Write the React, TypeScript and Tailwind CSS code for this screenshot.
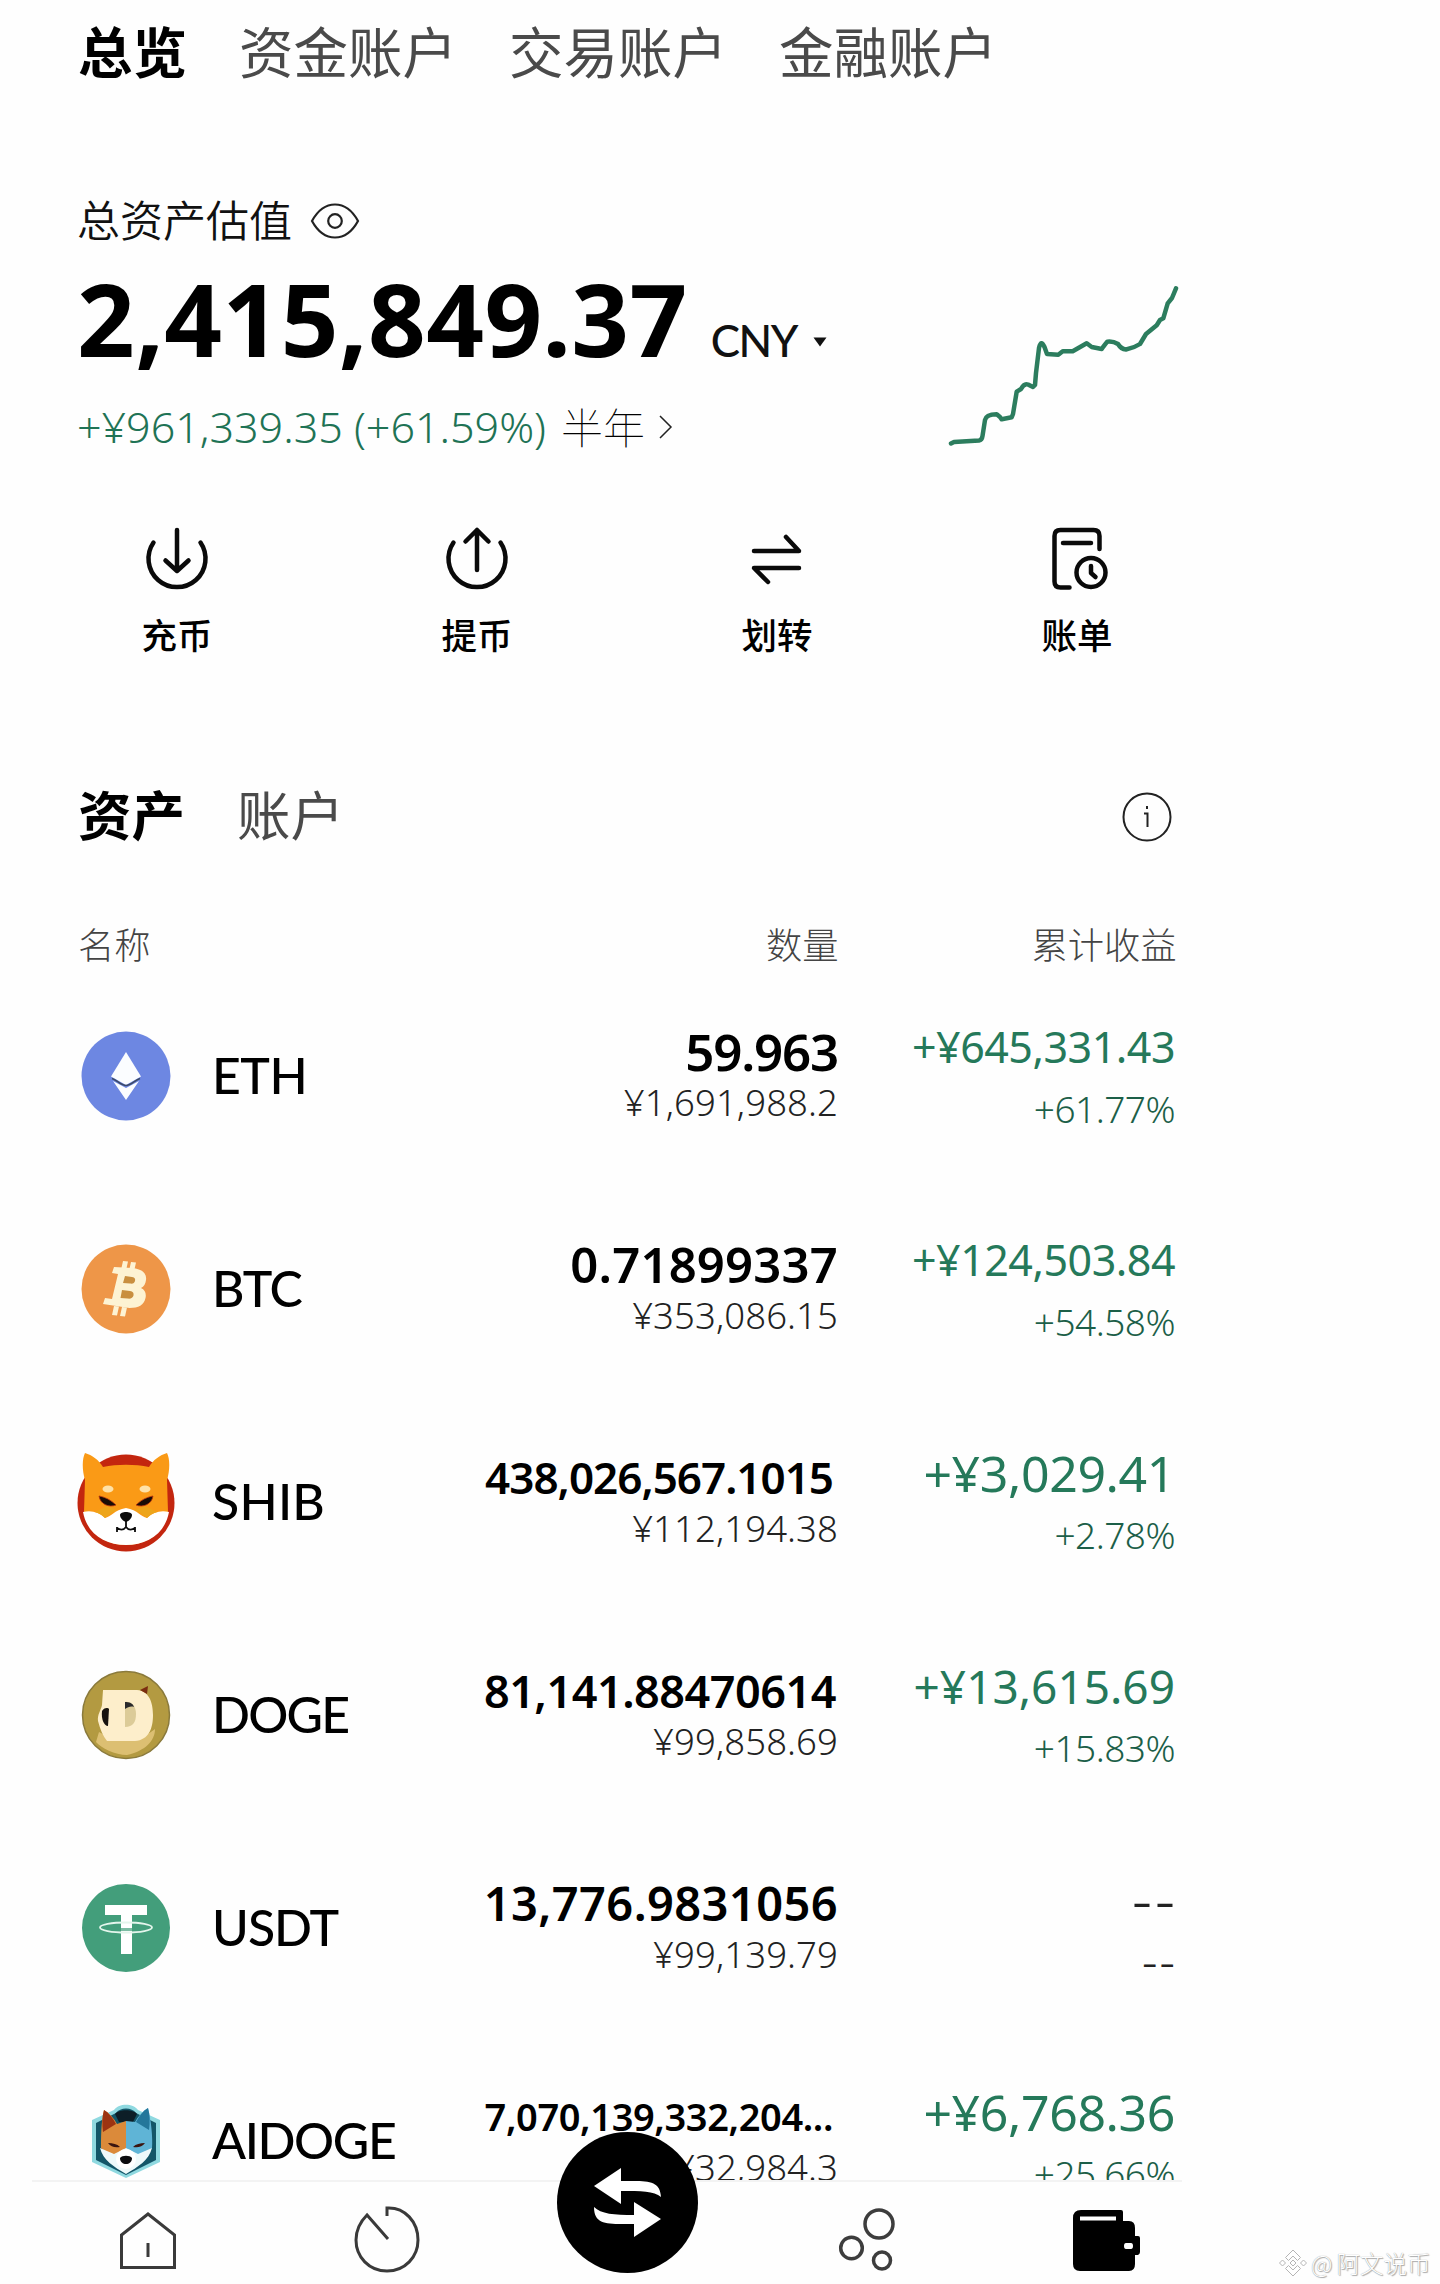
import React from 'react';

const sans = "font-['Noto_Sans','Noto_Sans_CJK_SC',sans-serif]";
const cjk = "font-['Noto_Sans_CJK_SC','Noto_Sans',sans-serif]";
const lato = "font-['Lato','Noto_Sans',sans-serif]";

type Asset = {
  name: string;
  icon: React.ReactNode;
  nameCls: string;
  amount: string;
  amountCls: string;
  value: string;
  gain: string;
  gainCls: string;
  pct: string;
  pctCls: string;
};

function EthIcon() {
  return (
    <svg viewBox="0 0 90 90" className="size-[90px]">
      <circle cx="45" cy="45" r="44.5" fill="#6d87e2" />
      <path d="M45 21 60 45.5 45 54 30 45.5Z" fill="#fbfdff" />
      <path d="M32 50 45 57 58 50 45 69Z" fill="#fbfdff" />
      <path d="M31 47.5c5 1.500 9 7 14 7s9-5.500 14-7" fill="none" stroke="#3c4a66" strokeWidth="1.500" />
    </svg>
  );
}

function BtcIcon() {
  return (
    <svg viewBox="0 0 90 90" className="size-[90px]">
      <circle cx="45" cy="45" r="44.5" fill="#ee9648" />
      <g fill="#fdf3d3">
        <path d="m33 23 18 1c10 1 15 5 14 12-.5 4-2 6.500-5 8 4 2 5.500 5.500 4.500 10-1.500 7-7 10-16 10L22 60l2-6 7 1 6-25-6-1z" />
        <path d="m42 17 5 .5-2 9-5-.5zM50 18l5 .5-2 9-5-.5zM33 62l5 .5-2 9-5-.5zM41 63l5 .5-2 9-5-.5z" />
      </g>
      <path d="m44 32 7 1c3 .5 3.500 2 3 4s-2 3-5 2.500l-7-.5zM41 46l8 1c3 .5 4 2 3.500 4.500s-3 3.500-6 3l-7-.5z" fill="#c98f3f" />
    </svg>
  );
}

function ShibIcon() {
  return (
    <svg viewBox="0 0 98 100" className="h-[100px] w-[98px]">
      <circle cx="49" cy="51" r="48.500" fill="#c3260f" />
      <path d="M8 1C5 7 5 18 8 28L7 60c4 22 22 33 42 33s38-11 42-33l-1-32c3-10 3-21 0-27-7 2-14 7-18 14-14-3-32-3-46 0C22 8 15 3 8 1Z" fill="#fa9a16" />
      <path d="M28 13C40 8 58 8 70 13c-6 -6 -14 -9.500 -21 -9.500S34 7 28 13Z" fill="#c3260f" />
      <path d="M6 60c8-2 16 0 22 6 6-1 9-8 21-10 12 2 15 9 21 10 6-6 14-8 22-6-4 22-22 33-43 33S10 82 6 60Z" fill="#fff" />
      <path d="M28 66c3-3 8-6 12-8l-10-4-12 6c4 1 7 3 10 6ZM70 66c-3-3-8-6-12-8l10-4 12 6c-4 1-7 3-10 6Z" fill="#eda51b" />
      <ellipse cx="31" cy="37" rx="5.500" ry="3.500" fill="#ffe2a8" />
      <ellipse cx="68" cy="37" rx="5.500" ry="3.500" fill="#ffe2a8" />
      <path d="M22 44c6 1 12 4 17 9-7 3-16-1-17-9ZM76 44c-6 1-12 4-17 9 7 3 16-1 17-9Z" fill="#180c06" stroke="#b8330e" strokeWidth=".8" />
      <path d="M43 63c0-4 12-4 12 0 0 3-3 6-6 7-3-1-6-4-6-7Z" fill="#0b0b0b" />
      <path d="M49 69v6m0 0c-3 4-6 3-9 1m9-1c3 4 6 3 9 1M40 75v5M58 75v5" fill="none" stroke="#0b0b0b" strokeWidth="1.800" />
    </svg>
  );
}

function DogeIcon() {
  return (
    <svg viewBox="0 0 90 90" className="size-[90px]">
      <circle cx="45" cy="45" r="43.500" fill="#b39a41" stroke="#8a7a3c" strokeWidth="1.500" />
      <path d="M18 62c10 6 20 4 32 6 10 0 18-4 24-9 0 12-10 22-28 26C34 85 20 78 15 72Z" fill="#dcbf72" />
      <path d="M22 20h34c12 1 16 12 16 25S68 70 54 71H26c-4-5-7-12-9-20-1-6 3-11 4-16Z" fill="#fdeecb" />
      <path d="M44 32c6-1 11 4 11 12s-3 13-11 13Z" fill="#dccb98" />
      <path d="M44 32c4 0 8 1 9 5-3-1-6 0-9 2Z" fill="#2a2a2c" />
      <path d="M21 41c3-4 6-3 7-2l-1 17c-4 0-7-7-6-15Z" fill="#17120e" />
      <path d="m59 20 8-4-1 8z" fill="#7a2c10" />
    </svg>
  );
}

function UsdtIcon() {
  return (
    <svg viewBox="0 0 90 90" className="size-[90px]">
      <circle cx="45" cy="45" r="44" fill="#439e7b" />
      <path d="M24 22h42v10H51v39H40V32H24Z" fill="#fff" />
      <ellipse cx="45" cy="44.500" rx="26" ry="5" fill="none" stroke="#e4f5ec" strokeWidth="1.800" />
      <path d="M40 45h11v3H40z" fill="#439e7b" opacity=".7" />
    </svg>
  );
}

function AidogeIcon() {
  return (
    <svg viewBox="0 0 76 78" className="h-[78px] w-[76px]">
      <path d="M4 18 26 8c5-7 19-7 24 0l22 10v42L38 76 4 60Z" fill="#8fd9e0" />
      <path d="M8 21 28 11c4-6 16-6 20 0l20 10v37L38 73 8 58Z" fill="#135668" />
      <path d="M27 12c4-5 18-5 22 0l-4 8H31Z" fill="#0d1e27" />
      <path d="M16 8c5 3 10 8 13 14l9-3v49L24 58 13 46c0-8 0-27 3-38Z" fill="#db8a3a" />
      <path d="M16 8c5 3 9 8 12 14l-13 8c-1-8-1-15 1-22Z" fill="#9c3311" />
      <path d="M60 6c-5 3-10 8-13 14l-9-1v49l14-10 12-12c1-9-1-29-4-40Z" fill="#5fb4d6" />
      <path d="M60 6c-5 3-9 8-12 14l13 8c1-8 1-15-1-22Z" fill="#24779b" />
      <path d="m12 46 14 6 12-6 12 6 14-6c-3 12-14 19-26 26C26 65 15 58 12 46Z" fill="#eef9fa" />
      <path d="M20 41c5 0 9 1 12 4-5 1-9 0-12-4ZM57 41c-5 0-9 1-12 4 5 1 9 0 12-4Z" fill="#3b1510" />
      <circle cx="38" cy="57" r="10" fill="#fff" />
      <path d="M32 56c2-3 10-3 12 0 0 4-3 6-6 6s-6-2-6-6Z" fill="#0c0c0f" />
    </svg>
  );
}

const green = 'text-[#25795a]';
const pctBase = 'text-[37px] tracking-[-0.5px] text-[#1c5f48]';

const assets: Asset[] = [
  { name: 'ETH', icon: <EthIcon />, nameCls: 'tracking-[-0.5px]', amount: '59.963', amountCls: 'text-[51px] tracking-[-1.2px]', value: '¥1,691,988.2', gain: '+¥645,331.43', gainCls: `text-[43px] tracking-[-0.5px] ${green}`, pct: '+61.77%', pctCls: pctBase },
  { name: 'BTC', icon: <BtcIcon />, nameCls: 'tracking-[-1.2px]', amount: '0.71899337', amountCls: 'text-[49px] tracking-[0.2px]', value: '¥353,086.15', gain: '+¥124,503.84', gainCls: `text-[43px] tracking-[-0.5px] ${green}`, pct: '+54.58%', pctCls: pctBase },
  { name: 'SHIB', icon: <ShibIcon />, nameCls: 'tracking-[0.2px]', amount: '438,026,567.1015', amountCls: 'text-[44px] tracking-[-1px] pr-[5px]', value: '¥112,194.38', gain: '+¥3,029.41', gainCls: `text-[50px] tracking-[-0.4px] ${green}`, pct: '+2.78%', pctCls: pctBase },
  { name: 'DOGE', icon: <DogeIcon />, nameCls: 'tracking-[-1.8px]', amount: '81,141.88470614', amountCls: 'text-[45px] tracking-[-0.5px] pr-[2px]', value: '¥99,858.69', gain: '+¥13,615.69', gainCls: `text-[46px] ${green}`, pct: '+15.83%', pctCls: pctBase },
  { name: 'USDT', icon: <UsdtIcon />, nameCls: 'tracking-[-1px]', amount: '13,776.9831056', amountCls: 'text-[47px] tracking-[0.4px]', value: '¥99,139.79', gain: '--', gainCls: 'text-[62px] font-light tracking-[3px] text-[#222] -translate-y-[1px] -mr-[3px]', pct: '--', pctCls: 'text-[48px] tracking-[2px] text-[#222] -mr-[2px]' },
  { name: 'AIDOGE', icon: <AidogeIcon />, nameCls: 'tracking-[-1.4px]', amount: '7,070,139,332,204...', amountCls: 'text-[38px] tracking-[-0.4px] pr-[5px]', value: '¥32,984.3', gain: '+¥6,768.36', gainCls: `text-[50px] tracking-[-0.4px] ${green}`, pct: '+25.66%', pctCls: pctBase },
];

function AssetRow({ a }: { a: Asset }) {
  return (
    <div className="flex h-[213px] shrink-0 items-center">
      <div className="flex w-[98px] shrink-0 justify-center">{a.icon}</div>
      <div className={`w-[240px] pb-[2px] pl-[37px] text-[50px] leading-[60px] font-medium text-black ${lato}`}><span className={a.nameCls}>{a.name}</span></div>
      <div className="flex w-[423px] flex-col items-end pt-[2px]">
        <div className={`h-[51px] leading-[51px] font-semibold whitespace-nowrap text-black ${a.amountCls}`}>{a.amount}</div>
        <div className="h-[51px] text-[36.5px] leading-[51px] font-light tracking-[0.1px] whitespace-nowrap text-[#222]">{a.value}</div>
      </div>
      <div className="flex w-[337px] flex-col items-end pt-[5px]">
        <div className={`h-[62px] leading-[62px] whitespace-nowrap ${a.gainCls}`}>{a.gain}</div>
        <div className={`h-[62px] leading-[62px] font-light whitespace-nowrap ${a.pctCls}`}>{a.pct}</div>
      </div>
    </div>
  );
}

function ActionItem({ label, children }: { label: string; children: React.ReactNode }) {
  return (
    <div className="flex w-[300px] flex-col items-center">
      <svg viewBox="0 0 64 64" className="size-[64px] fill-none stroke-[#0a0a0a] stroke-[4.500]" strokeLinecap="round" strokeLinejoin="round">
        {children}
      </svg>
      <div className={`mt-[20px] text-[35.5px] leading-[48px] font-medium text-black ${cjk}`}>{label}</div>
    </div>
  );
}

export default function App() {
  return (
    <div className={`relative flex h-[2284px] w-[1440px] flex-col overflow-hidden bg-[#fefefe] text-black ${sans}`}>
      <div className={`flex h-[104px] shrink-0 items-center gap-[52px] pb-[5px] pl-[78px] text-[54.5px] leading-[60px] ${cjk}`}>
        <span className="font-bold">总览</span>
        <span className="text-[#4a4a4a]">资金账户</span>
        <span className="text-[#4a4a4a]">交易账户</span>
        <span className="text-[#4a4a4a]">金融账户</span>
      </div>

      <div className="relative flex h-[368px] shrink-0 flex-col pt-[84px] pl-[77px]">
        <div className="flex h-[64px] items-center">
          <span className={`pb-[5px] text-[43px] leading-[60px] font-[350] text-[#111] ${cjk}`}>总资产估值</span>
          <svg viewBox="0 0 50 40" className="ml-[18px] h-[40px] w-[50px] translate-y-[1px] fill-none stroke-[#222] stroke-[2.200]">
            <path d="M2 20C8 9 16 3.500 25 3.500S42 9 48 20C42 31 34 36.500 25 36.500S8 31 2 20Z" />
            <circle cx="25" cy="20" r="6.800" />
          </svg>
        </div>
        <div className="flex h-[132px] items-baseline">
          <span className="text-[101px] leading-[132px] font-bold tracking-[0.4px]">2,415,849.37</span>
          <span className={`ml-[23px] text-[44px] leading-[60px] font-medium tracking-[-1.5px] text-[#111] ${lato}`}>CNY</span>
          <svg viewBox="0 0 14 10" className="ml-[16px] h-[10px] w-[14px] -translate-y-[10px]"><path d="M.5.5h13L7 9.500Z" fill="#111" /></svg>
        </div>
        <div className="mt-[13px] flex h-[60px] items-center">
          <span className="text-[43px] leading-[60px] font-light whitespace-pre text-[#1f7355]">+¥961,339.35 (+61.59%)</span>
          <span className={`ml-[15px] pb-[2px] text-[42px] leading-[60px] font-thin text-[#000] ${cjk}`}>半年</span>
          <svg viewBox="0 0 16 26" className="ml-[13px] h-[26px] w-[16px] fill-none stroke-[#222] stroke-[1.500]"><path d="m2 2 11 11L2 24" /></svg>
        </div>
        <svg viewBox="0 0 240 170" className="absolute top-[176px] left-[945px] h-[170px] w-[240px] fill-none stroke-[#2c7d5e] stroke-[4.500]" strokeLinecap="round" strokeLinejoin="round">
          <path d="M6 163.500 9 162 34 160.500Q37 160 37.500 156L40 140Q41 134.500 51.700 134.300L55 137 56.700 139.300 66.700 137.300 68 134 71.700 111.700 76 109Q79 103 83 104.500L88 107 90 105 91 93 94 68Q96 59 99.500 67L102 74 113.300 74.700 117.700 71.300 127.700 71.300 141.700 63.300 146.700 67 156.700 69Q158 67 162.300 61.700 168 61 173 64 176 69 181 69.500 189 68 195 64L201 54 211.700 45.300 215 40 218.300 38.300 222.700 23.300 227 18 231 8.300" />
        </svg>
      </div>

      <div className="flex shrink-0 pt-[54px] pl-[27px]">
        <ActionItem label="充币">
          <path d="M8.500 16.500A28.500 28.500 0 1 0 55.500 16.500M32 4v40M20.500 34.500 32 45l11.500-10.500" />
        </ActionItem>
        <ActionItem label="提币">
          <path d="M8.500 16.500A28.500 28.500 0 1 0 55.500 16.500M32 44V4M20.500 15.500 32 4l11.500 11.500" />
        </ActionItem>
        <ActionItem label="划转">
          <path d="M9 25h45L41 11M54 42H9l14 14" />
        </ActionItem>
        <ActionItem label="账单">
          <path d="M24.500 61.500h-9c-4 0-6-2-6-6V10c0-4 2-6 6-6h33c4 0 6 2 6 6v13M18 17h28" />
          <circle cx="46" cy="46.500" r="14.500" />
          <path d="M46 40v7l4.500 4" />
        </ActionItem>
      </div>

      <div className={`mt-[127px] flex h-[64px] shrink-0 items-center pl-[78px] text-[53.5px] leading-[60px] ${cjk}`}>
        <span className="pb-[8px] font-bold">资产</span>
        <span className="ml-[52px] pb-[8px] text-[#4a4a4a]">账户</span>
        <svg viewBox="0 0 50 50" className="ml-[778px] size-[50px] fill-none stroke-[#222] stroke-2">
          <circle cx="25" cy="25" r="23.500" />
          <path d="M22 21.500H25.500V35M25 14v3" />
        </svg>
      </div>

      <div className={`mt-[72px] mb-[4px] flex h-[44px] shrink-0 items-center pl-[78px] text-[36.300px] leading-[44px] font-light text-[#444] ${cjk}`}>
        <span>名称</span>
        <span className="w-[688px] text-right">数量</span>
        <span className="w-[338px] text-right">累计收益</span>
      </div>

      <div className="flex min-h-0 flex-1 flex-col overflow-hidden pl-[77px]">
        {assets.map((a) => <AssetRow key={a.name} a={a} />)}
      </div>

      <div className="relative h-[104px] shrink-0 bg-[#fefefe]">
        <div className="ml-[32px] h-[2px] w-[1150px] bg-[#f3f3f3]" />
        <svg viewBox="0 0 60 60" className="absolute top-[30px] left-[118px] size-[60px] fill-none stroke-[#3a3a3a] stroke-3">
          <path d="M3.500 25 30 4l26.500 21v32.500h-53ZM30 33v14" />
        </svg>
        <svg viewBox="0 0 70 70" className="absolute top-[24px] left-[352px] size-[70px] fill-none stroke-[#3a3a3a] stroke-3">
          <path d="M35 12V4C53 3 66 18 66 36c0 17-13 31-31 31S4 53 4 36c0-9 4-18 11-25l21 24" />
        </svg>
        <div className="absolute top-[-48px] left-[557px] flex size-[141px] items-center justify-center rounded-full bg-black">
          <svg viewBox="0 0 141 141" className="size-[141px] fill-white">
            <path d="M37 54 64 36v13c25 0 39-2 40 16-7-6-20-6-40-6v13ZM104 87 77 105V92C52 92 37 94 37 75c7 7 20 8 40 8V70Z" />
          </svg>
        </div>
        <svg viewBox="0 0 60 66" className="absolute top-[28px] left-[837px] h-[66px] w-[60px] fill-none stroke-[#3d3d3d] stroke-[3.500]">
          <circle cx="42" cy="16" r="14" />
          <circle cx="14.500" cy="40" r="10.800" />
          <circle cx="45" cy="52.500" r="8.500" />
        </svg>
        <svg viewBox="0 0 68 62" className="absolute top-[30px] left-[1073px] h-[62px] w-[68px]">
          <path fillRule="evenodd" d="M8 0h40q2 0 2 2v9h6q6 0 6 7v8h3q2 0 2 2v14q0 2-2 3h-3v9q0 7-6 7H7q-7 0-7-7V8q0-8 8-8ZM7 6.500v4h36v-4ZM53 33q-2 0-2 3t2 3h5q2 0 2-3t-2-3Z" />
        </svg>
        <div className={`absolute top-[65px] left-[1279px] flex items-center text-[23.500px] leading-[36px] font-light whitespace-nowrap text-white [text-shadow:0_0_1px_#888,1px_1px_1px_#aaa] ${cjk}`}>
          <svg viewBox="0 0 28 28" className="size-[28px] fill-white stroke-[#b5b5b5] stroke-1">
            <path d="m14 1 7.500 7.500-3 3L14 7l-4.500 4.500-3-3ZM14 27l7.500-7.500-3-3L14 21l-4.500-4.500-3 3ZM3.500 11l3 3-3 3-3-3ZM24.500 11l3 3-3 3-3-3ZM14 11l3 3-3 3-3-3Z" />
          </svg>
          <span className="ml-[4px]">@</span>
          <span className="ml-[4px]">阿文说币</span>
        </div>
      </div>
    </div>
  );
}
